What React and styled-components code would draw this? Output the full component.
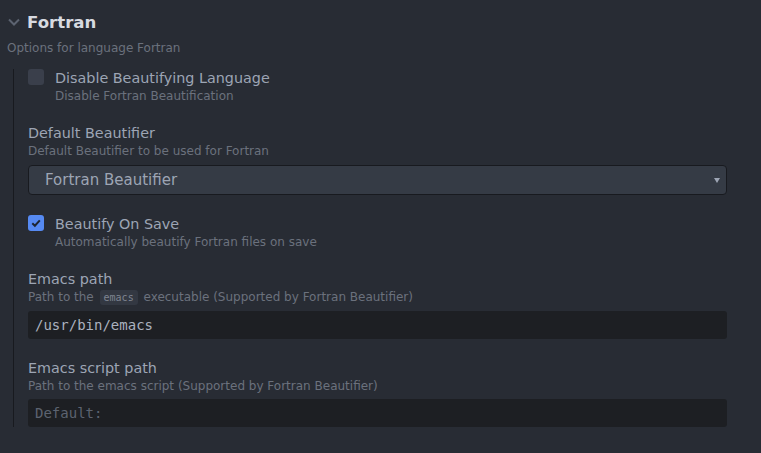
import React from "react";
import styled, { createGlobalStyle } from "styled-components";

const GlobalStyle = createGlobalStyle`
  html, body {
    margin: 0;
    background: #282c34;
  }
  body {
    font-family: "DejaVu Sans", "Noto Sans", sans-serif;
    color: #9da5b4;
  }
`;

const Panel = styled.section`
  padding: 10px 0 0 7px;
  width: 720px;
`;

const Header = styled.div`
  display: flex;
  align-items: center;
  gap: 6px;
  height: 24px;
`;

const Chevron = styled.svg`
  width: 14px;
  height: 14px;
  color: #5c6370;
`;

const Title = styled.h2`
  margin: 0;
  font-size: 16.6px;
  font-weight: bold;
  color: #d7dae0;
`;

const SectionNote = styled.div`
  margin-top: 7px;
  font-size: 12px;
  color: #6b717d;
`;

const Body = styled.div`
  margin: 14px 0 0 6px;
  padding: 0 0 0 14px;
  border-left: 1px solid #181a1f;
  display: flex;
  flex-direction: column;
  gap: 20px;
`;

const Setting = styled.div`
  display: flex;
  flex-direction: column;
`;

const CheckRow = styled.label`
  display: grid;
  grid-template-columns: 16px 1fr;
  column-gap: 11px;
`;

const Box = styled.span`
  width: 16px;
  height: 16px;
  border-radius: 3px;
  background: ${(p) => (p.$checked ? "#568af2" : "#3a3f4b")};
  display: flex;
  align-items: center;
  justify-content: center;
`;

const Label = styled.div`
  font-size: 14.35px;
  line-height: 18px;
  color: #9da5b4;
`;

const Hint = styled.div`
  font-size: 12px;
  line-height: 16px;
  color: #6b717d;
  margin-top: 1px;
`;

const Code = styled.code`
  font-family: "DejaVu Sans Mono", monospace;
  font-size: 10px;
  background: #333842;
  border-radius: 3px;
  padding: 2px 4px;
  margin: 0 2px;
  color: #7f8591;
`;

const Select = styled.div`
  margin-top: 6px;
  height: 28px;
  border: 1px solid #181a1f;
  border-radius: 4px;
  background: #353b45;
  display: flex;
  align-items: center;
  justify-content: space-between;
  padding: 0 6px 0 16px;
  font-size: 15px;
  color: #9da5b4;
`;

const Caret = styled.span`
  width: 0;
  height: 0;
  border-left: 3px solid transparent;
  border-right: 3px solid transparent;
  border-top: 5px solid #9da5b4;
`;

const Input = styled.div`
  margin-top: 5px;
  height: 28px;
  border-radius: 3px;
  background: #1d1f23;
  display: flex;
  align-items: center;
  padding: 0 7px;
  font-family: "DejaVu Sans Mono", monospace;
  font-size: 14px;
  color: ${(p) => (p.$placeholder ? "#5c6370" : "#abb2bf")};
`;

function Check({ checked }) {
  return (
    <Box $checked={checked}>
      {checked && (
        <svg width="12" height="12" viewBox="0 0 12 12">
          <path d="M2.3 6.2 L4.9 8.7 L9.8 3.4" fill="none" stroke="#1d2533" strokeWidth="2" />
        </svg>
      )}
    </Box>
  );
}

export default function App() {
  return (
    <>
      <GlobalStyle />
      <Panel>
        <Header>
          <Chevron viewBox="0 0 14 14">
            <path d="M2 4.5 L7 9.5 L12 4.5" fill="none" stroke="currentColor" strokeWidth="2" />
          </Chevron>
          <Title>Fortran</Title>
        </Header>
        <SectionNote>Options for language Fortran</SectionNote>
        <Body>
          <CheckRow>
            <Check />
            <div>
              <Label>Disable Beautifying Language</Label>
              <Hint>Disable Fortran Beautification</Hint>
            </div>
          </CheckRow>

          <Setting>
            <Label>Default Beautifier</Label>
            <Hint>Default Beautifier to be used for Fortran</Hint>
            <Select>
              Fortran Beautifier
              <Caret />
            </Select>
          </Setting>

          <CheckRow>
            <Check checked />
            <div>
              <Label>Beautify On Save</Label>
              <Hint>Automatically beautify Fortran files on save</Hint>
            </div>
          </CheckRow>

          <Setting>
            <Label>Emacs path</Label>
            <Hint>
              Path to the <Code>emacs</Code> executable (Supported by Fortran Beautifier)
            </Hint>
            <Input>/usr/bin/emacs</Input>
          </Setting>

          <Setting>
            <Label>Emacs script path</Label>
            <Hint>Path to the emacs script (Supported by Fortran Beautifier)</Hint>
            <Input $placeholder>Default:</Input>
          </Setting>
        </Body>
      </Panel>
    </>
  );
}
